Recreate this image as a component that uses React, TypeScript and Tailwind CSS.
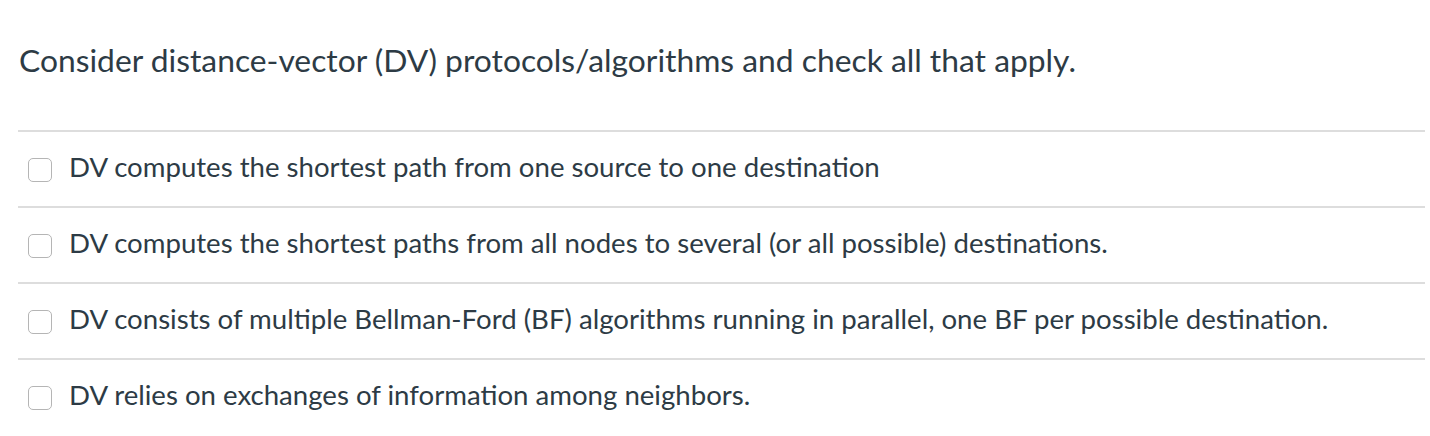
const options = [
  "DV computes the shortest path from one source to one destination",
  "DV computes the shortest paths from all nodes to several (or all possible) destinations.",
  "DV consists of multiple Bellman-Ford (BF) algorithms running in parallel, one BF per possible destination.",
  "DV relies on exchanges of information among neighbors.",
];

export default function App() {
  return (
    <div
      className="w-[1430px] h-[436px] bg-white pl-[18px] pr-[5px] text-[#2d3b45]"
      style={{ fontFamily: "Lato, 'Open Sans', sans-serif" }}
    >
      <div className="pt-[40px] pb-[50px] pl-[1px] text-[31.8px] leading-[40px]">
        Consider distance-vector (DV) protocols/algorithms and check all that apply.
      </div>
      <div>
        {options.map((text) => (
          <label
            key={text}
            className="flex h-[76px] items-center border-t-2 border-[#dddddd] pl-[10px]"
          >
            <span className="mt-[2px] h-[24px] w-[24px] shrink-0 rounded-[5px] border-[1.5px] border-[#b5b5b5] bg-white" />
            <span className="ml-[17px] text-[27.6px] leading-[34px] -mt-[4px]">{text}</span>
          </label>
        ))}
      </div>
    </div>
  );
}
